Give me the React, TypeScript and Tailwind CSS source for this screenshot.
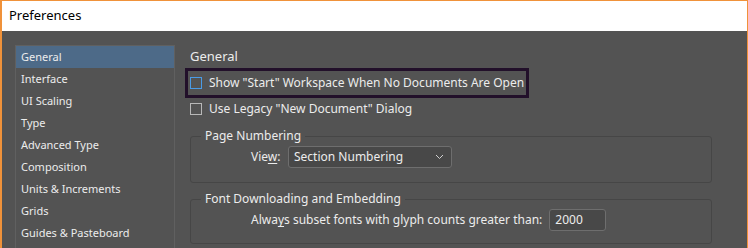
import React from 'react';

const sections = [
  'General',
  'Interface',
  'UI Scaling',
  'Type',
  'Advanced Type',
  'Composition',
  'Units & Increments',
  'Grids',
  'Guides & Pasteboard',
];

const Check = ({ focus }: { focus?: boolean }) => (
  <span
    className={`block w-[12px] h-[12px] shrink-0 border ${focus ? 'border-[#4a9be6]' : 'border-[#b8b8b8]'}`}
  />
);

const Group = ({ title, h, children }: { title: string; h: string; children: React.ReactNode }) => (
  <div className={`relative ml-[5px] w-[522px] ${h} border border-[#464646] rounded-[3px]`}>
    <span className="absolute left-[10px] top-[-10px] px-[4px] bg-[#535353] leading-[18px] text-[12px] text-[#ececec]">
      {title}
    </span>
    {children}
  </div>
);

export default function App() {
  return (
    <div
      className="w-[748px] h-[248px] overflow-hidden flex flex-col border-l-2 border-t border-r border-[#f0923a] bg-[#535353]"
      style={{ fontFamily: '"Noto Sans", "Open Sans", sans-serif' }}
    >
      <div className="h-[30px] shrink-0 bg-white flex items-center pl-[7px] text-[13px] text-black">
        Preferences
      </div>
      <div className="flex flex-1 pt-[14px] pl-[13px]">
        <ul className="w-[160px] shrink-0 border border-[#606060] border-b-0 self-stretch">
          {sections.map((s, i) => (
            <li
              key={s}
              className={`h-[22px] flex items-center pl-[5px] text-[11px] text-[#ececec] ${i === 0 ? 'bg-[#4d6a88]' : ''}`}
            >
              {s}
            </li>
          ))}
        </ul>
        <div className="ml-[10px] flex flex-col text-[12px] text-[#ececec]">
          <div className="mt-[2px] h-[18px] leading-[18px] pl-[5px] text-[13px]">General</div>
          <div className="mt-[3px] h-[30px] w-[344px] border-[3px] border-[#22102a] flex items-center gap-[7px] pl-[2px]">
            <Check focus />
            <span className="whitespace-nowrap">Show "Start" Workspace When No Documents Are Open</span>
          </div>
          <div className="h-[22px] flex items-center gap-[7px] pl-[5px]">
            <Check />
            <span className="whitespace-nowrap">Use Legacy "New Document" Dialog</span>
          </div>
          <div className="mt-[16px]">
            <Group title="Page Numbering" h="h-[47px]">
              <div className="flex items-center h-full pl-[60px] pb-[6px]">
                <span className="w-[37px]">
                  Vie<span className="underline underline-offset-2 [text-decoration-skip-ink:none]">w</span>:
                </span>
                <div className="w-[164px] h-[22px] border border-[#6e6e6e] rounded-[3px] bg-[#484848] flex items-center justify-between pl-[5px] pr-[7px]">
                  <span>Section Numbering</span>
                  <svg width="9" height="6" viewBox="0 0 9 6" fill="none" stroke="#d0d0d0" strokeWidth="1">
                    <path d="M1 1l3.5 3.5L8 1" />
                  </svg>
                </div>
              </div>
            </Group>
          </div>
          <div className="mt-[16px]">
            <Group title="Font Downloading and Embedding" h="h-[45px]">
              <div className="flex items-center h-full pl-[60px] pb-[4px]">
                <span className="whitespace-nowrap">
                  Alwa<span className="underline underline-offset-2 [text-decoration-skip-ink:none]">y</span>s subset fonts with glyph counts greater than:
                </span>
                <div className="ml-[7px] w-[57px] h-[22px] border border-[#6e6e6e] rounded-[3px] bg-[#484848] flex items-center pl-[5px]">
                  2000
                </div>
              </div>
            </Group>
          </div>
        </div>
      </div>
    </div>
  );
}
